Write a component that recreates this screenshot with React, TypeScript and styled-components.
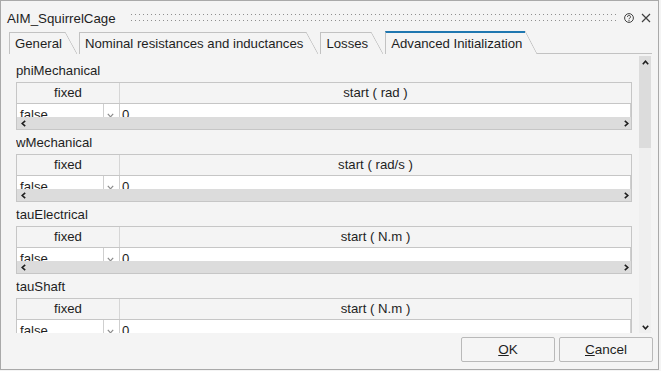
import React from "react";
import styled, { createGlobalStyle } from "styled-components";

const GlobalStyle = createGlobalStyle`
  html, body {
    margin: 0;
    padding: 0;
    background: #f4f4f4;
  }
  body {
    font-family: "Liberation Sans", Arial, sans-serif;
    font-size: 13.2px;
    color: #1e1e1e;
  }
`;

const Window = styled.div`
  width: 659px;
  height: 370px;
  box-sizing: border-box;
  border: 1px solid #a9a9a9;
  background: #f4f4f4;
  display: flex;
  flex-direction: column;
  overflow: hidden;
`;

const TitleBar = styled.div`
  height: 30px;
  box-sizing: border-box;
  padding: 4px 7px 0 6px;
  display: flex;
  align-items: center;
`;

const Title = styled.span`
  font-size: 13.3px;
  white-space: nowrap;
`;

const Grip = styled.div`
  flex: 1;
  height: 8px;
  margin: 0 8px 0 15px;
  background-image: radial-gradient(circle at 0.5px 0.5px, #8e8e8e 0.8px, transparent 0.9px);
  background-size: 4px 6px;
`;

const TitleIcons = styled.div`
  display: flex;
  align-items: center;
  gap: 7px;
`;

const TabStrip = styled.div`
  height: 23px;
  display: flex;
  align-items: flex-end;
  padding: 0 6px 0 8px;
`;

const Tab = styled.div<{ $active?: boolean }>`
  position: relative;
  height: ${(p) => (p.$active ? 23 : 22)}px;
  box-sizing: border-box;
  padding: 0 3px 0 5px;
  margin-right: 14px;
  display: flex;
  align-items: center;
  white-space: nowrap;
  border-left: 1px solid #c2c2c2;
  border-top: ${(p) => (p.$active ? "2px solid #1f77b0" : "1px solid #c2c2c2")};
  &::after {
    content: "";
    position: absolute;
    left: 100%;
    top: ${(p) => (p.$active ? -2 : -1)}px;
    bottom: 0;
    width: 12px;
    background: linear-gradient(
      to top right,
      transparent calc(50% - 0.7px),
      #c2c2c2 50%,
      transparent calc(50% + 0.7px)
    );
  }
`;

const TabFiller = styled.div`
  flex: 1;
  align-self: stretch;
  margin-left: -2px;
  border-bottom: 1px solid #c2c2c2;
`;

const Body = styled.div`
  margin-top: 2px;
  height: 277px;
  display: flex;
  gap: 7px;
  padding: 0 7px 0 15px;
`;

const ScrollArea = styled.div`
  flex: 1;
  overflow: hidden;
  padding-top: 2px;
`;

const ParamLabel = styled.div`
  height: 24px;
  box-sizing: border-box;
  padding-top: 2px;
  line-height: 22px;
`;

const Table = styled.div`
  height: 48px;
  box-sizing: border-box;
  border: 1px solid #c6c6c6;
  display: flex;
  flex-direction: column;
`;

const HeaderRow = styled.div`
  display: grid;
  grid-template-columns: 103px 1fr;
  height: 21px;
  box-sizing: border-box;
  border-bottom: 1px solid #c6c6c6;
`;

const HeaderCell = styled.div<{ $divider?: boolean }>`
  text-align: center;
  line-height: 20px;
  box-sizing: border-box;
  border-right: ${(p) => (p.$divider ? "1px solid #d6d6d6" : "none")};
`;

const DataClip = styled.div`
  height: 13px;
  overflow: hidden;
  background: #ffffff;
`;

const DataRow = styled.div`
  display: grid;
  grid-template-columns: 87px 16px 1fr;
  height: 22px;
`;

const DataCell = styled.div<{ $pad?: number }>`
  line-height: 22px;
  padding-left: ${(p) => p.$pad ?? 0}px;
  box-sizing: border-box;
  border-right: 1px solid #cfcfcf;
  background: #ffffff;
  overflow: hidden;
  white-space: nowrap;
`;

const DropCell = styled.div`
  box-sizing: border-box;
  border-right: 1px solid #cfcfcf;
  display: flex;
  align-items: center;
  justify-content: center;
  padding-right: 3px;
`;

const HScroll = styled.div`
  height: 12px;
  background: #dcdcdc;
  display: flex;
  align-items: center;
  justify-content: space-between;
  padding: 0 2px 0 4px;
`;

const VScroll = styled.div`
  width: 12px;
  background: #efefef;
  display: flex;
  flex-direction: column;
  align-items: center;
`;

const VThumb = styled.div`
  width: 100%;
  height: 92px;
  background: #dcdcdc;
  display: flex;
  justify-content: center;
  padding-top: 4px;
  box-sizing: border-box;
`;

const VSpacer = styled.div`
  flex: 1;
`;

const VBottom = styled.div`
  padding-bottom: 3px;
  display: flex;
`;

const Footer = styled.div`
  display: flex;
  justify-content: flex-end;
  gap: 4px;
  padding: 4px 5px 0 0;
`;

const Button = styled.button`
  width: 94px;
  height: 25px;
  box-sizing: border-box;
  border: 1px solid #b9b9b9;
  border-radius: 2px;
  background: #f5f5f5;
  font-family: inherit;
  font-size: 13.5px;
  color: #1e1e1e;
  padding: 0;
`;

type Dir = "up" | "down" | "left" | "right";

const chevronPoints: Record<Dir, string> = {
  up: "0.8,4.2 3.5,1.2 6.2,4.2",
  down: "0.8,0.8 3.5,3.8 6.2,0.8",
  left: "4.2,0.8 1.2,3.5 4.2,6.2",
  right: "0.8,0.8 3.8,3.5 0.8,6.2",
};

function Chevron({ dir, color = "#1e1e1e", width = 1.6 }: { dir: Dir; color?: string; width?: number }) {
  const horiz = dir === "up" || dir === "down";
  return (
    <svg width={horiz ? 7 : 5} height={horiz ? 5 : 7} viewBox={horiz ? "0 0 7 5" : "0 0 5 7"}>
      <polyline points={chevronPoints[dir]} fill="none" stroke={color} strokeWidth={width} />
    </svg>
  );
}

function HelpIcon() {
  return (
    <svg width="10" height="10" viewBox="0 0 10 10">
      <circle cx="5" cy="5" r="4.4" fill="none" stroke="#404040" strokeWidth="1" />
      <path d="M3.5 3.9 A1.5 1.5 0 1 1 5.8 5.1 C5.2 5.4 5 5.7 5 6.3" fill="none" stroke="#404040" strokeWidth="1" />
      <circle cx="5" cy="7.7" r="0.6" fill="#404040" />
    </svg>
  );
}

function CloseIcon() {
  return (
    <svg width="10" height="10" viewBox="0 0 10 10">
      <path d="M1 1 L9 9 M9 1 L1 9" stroke="#404040" strokeWidth="1.2" />
    </svg>
  );
}

const params = [
  { name: "phiMechanical", unit: "rad" },
  { name: "wMechanical", unit: "rad/s" },
  { name: "tauElectrical", unit: "N.m" },
  { name: "tauShaft", unit: "N.m" },
];

const tabs = ["General", "Nominal resistances and inductances", "Losses", "Advanced Initialization"];

export default function App() {
  return (
    <>
      <GlobalStyle />
      <Window>
        <TitleBar>
          <Title>AIM_SquirrelCage</Title>
          <Grip />
          <TitleIcons>
            <HelpIcon />
            <CloseIcon />
          </TitleIcons>
        </TitleBar>
        <TabStrip>
          {tabs.map((t, i) => (
            <Tab key={t} $active={i === tabs.length - 1}>
              {t}
            </Tab>
          ))}
          <TabFiller />
        </TabStrip>
        <Body>
          <ScrollArea>
            {params.map((p) => (
              <div key={p.name}>
                <ParamLabel>{p.name}</ParamLabel>
                <Table>
                  <HeaderRow>
                    <HeaderCell $divider>fixed</HeaderCell>
                    <HeaderCell>start ( {p.unit} )</HeaderCell>
                  </HeaderRow>
                  <DataClip>
                    <DataRow>
                      <DataCell $pad={3}>false</DataCell>
                      <DropCell>
                        <Chevron dir="down" color="#8a8a8a" width={1.2} />
                      </DropCell>
                      <DataCell $pad={2}>0</DataCell>
                    </DataRow>
                  </DataClip>
                  <HScroll>
                    <Chevron dir="left" />
                    <Chevron dir="right" />
                  </HScroll>
                </Table>
              </div>
            ))}
          </ScrollArea>
          <VScroll>
            <VThumb>
              <Chevron dir="up" />
            </VThumb>
            <VSpacer />
            <VBottom>
              <Chevron dir="down" />
            </VBottom>
          </VScroll>
        </Body>
        <Footer>
          <Button>
            <u>O</u>K
          </Button>
          <Button>
            <u>C</u>ancel
          </Button>
        </Footer>
      </Window>
    </>
  );
}
